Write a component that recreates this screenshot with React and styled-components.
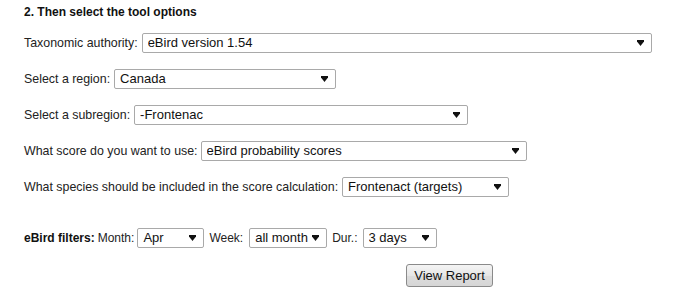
import React from "react";
import styled, { createGlobalStyle } from "styled-components";

const Global = createGlobalStyle`
  html, body { margin: 0; padding: 0; background: #fff; }
  body { font-family: Arial, "Liberation Sans", sans-serif; color: #222; }
`;

const arrow = encodeURIComponent(
  `<svg xmlns="http://www.w3.org/2000/svg" width="7" height="6" viewBox="0 0 7 6"><path d="M0 0h7v1.6L3.5 6 0 1.6z" fill="#111"/></svg>`
);

const Page = styled.div`
  padding: 5px 24px 0 24px;
  width: 700px;
  box-sizing: border-box;
`;

const Title = styled.h3`
  margin: 0 0 14px 0;
  font-size: 12px;
  font-weight: bold;
  color: #111;
  line-height: 14px;
`;

const Row = styled.div`
  display: flex;
  align-items: center;
  height: 20px;
  margin-bottom: ${(p) => p.$mb ?? 16}px;
  font-size: ${(p) => p.$fs ?? 12.4}px;
`;

const Label = styled.span`
  margin-right: ${(p) => p.$mr ?? 4}px;
  margin-left: ${(p) => p.$ml ?? 0}px;
  font-weight: ${(p) => (p.$bold ? "bold" : "normal")};
  color: ${(p) => (p.$bold ? "#111" : "#222")};
  white-space: nowrap;
`;

const Select = styled.select`
  appearance: none;
  -webkit-appearance: none;
  box-sizing: border-box;
  width: ${(p) => p.$w}px;
  height: 20px;
  margin: 0;
  padding: 0 12px 0 5px;
  border: 1px solid #a9a9a9;
  border-radius: 2px;
  background: #fff url("data:image/svg+xml,${arrow}") no-repeat right 7px center;
  font-family: Arial, "Liberation Sans", sans-serif;
  font-size: 13px;
  color: #111;
  line-height: 18px;
  outline: none;
`;

const ButtonRow = styled.div`
  display: flex;
  padding-left: 382px;
  margin-top: 16px;
`;

const Button = styled.button`
  box-sizing: border-box;
  width: 87px;
  height: 23px;
  padding: 0;
  border: 1px solid #8a8a8a;
  border-radius: 3px;
  background: linear-gradient(#f4f4f4, #e6e6e6 50%, #dcdcdc 51%, #d6d6d6);
  font-family: Arial, "Liberation Sans", sans-serif;
  font-size: 13px;
  color: #111;
`;

function Sel({ w, value }) {
  return (
    <Select $w={w} defaultValue={value}>
      <option>{value}</option>
    </Select>
  );
}

export default function App() {
  return (
    <>
      <Global />
      <Page>
        <Title>2. Then select the tool options</Title>
        <Row>
          <Label>Taxonomic authority:</Label>
          <Sel w={510} value="eBird version 1.54" />
        </Row>
        <Row>
          <Label>Select a region:</Label>
          <Sel w={222} value="Canada" />
        </Row>
        <Row>
          <Label>Select a subregion:</Label>
          <Sel w={334} value="-Frontenac" />
        </Row>
        <Row>
          <Label $mr={3}>What score do you want to use:</Label>
          <Sel w={326} value="eBird probability scores" />
        </Row>
        <Row $mb={31}>
          <Label>What species should be included in the score calculation:</Label>
          <Sel w={167} value="Frontenact (targets)" />
        </Row>
        <Row $mb={0} $fs={12}>
          <Label $bold $mr={3}>eBird filters:</Label>
          <Label $mr={3}>Month:</Label>
          <Sel w={67} value="Apr" />
          <Label $ml={5} $mr={6}>Week:</Label>
          <Sel w={78} value="all month" />
          <Label $ml={5} $mr={5}>Dur.:</Label>
          <Sel w={74} value="3 days" />
        </Row>
        <ButtonRow>
          <Button>View Report</Button>
        </ButtonRow>
      </Page>
    </>
  );
}
